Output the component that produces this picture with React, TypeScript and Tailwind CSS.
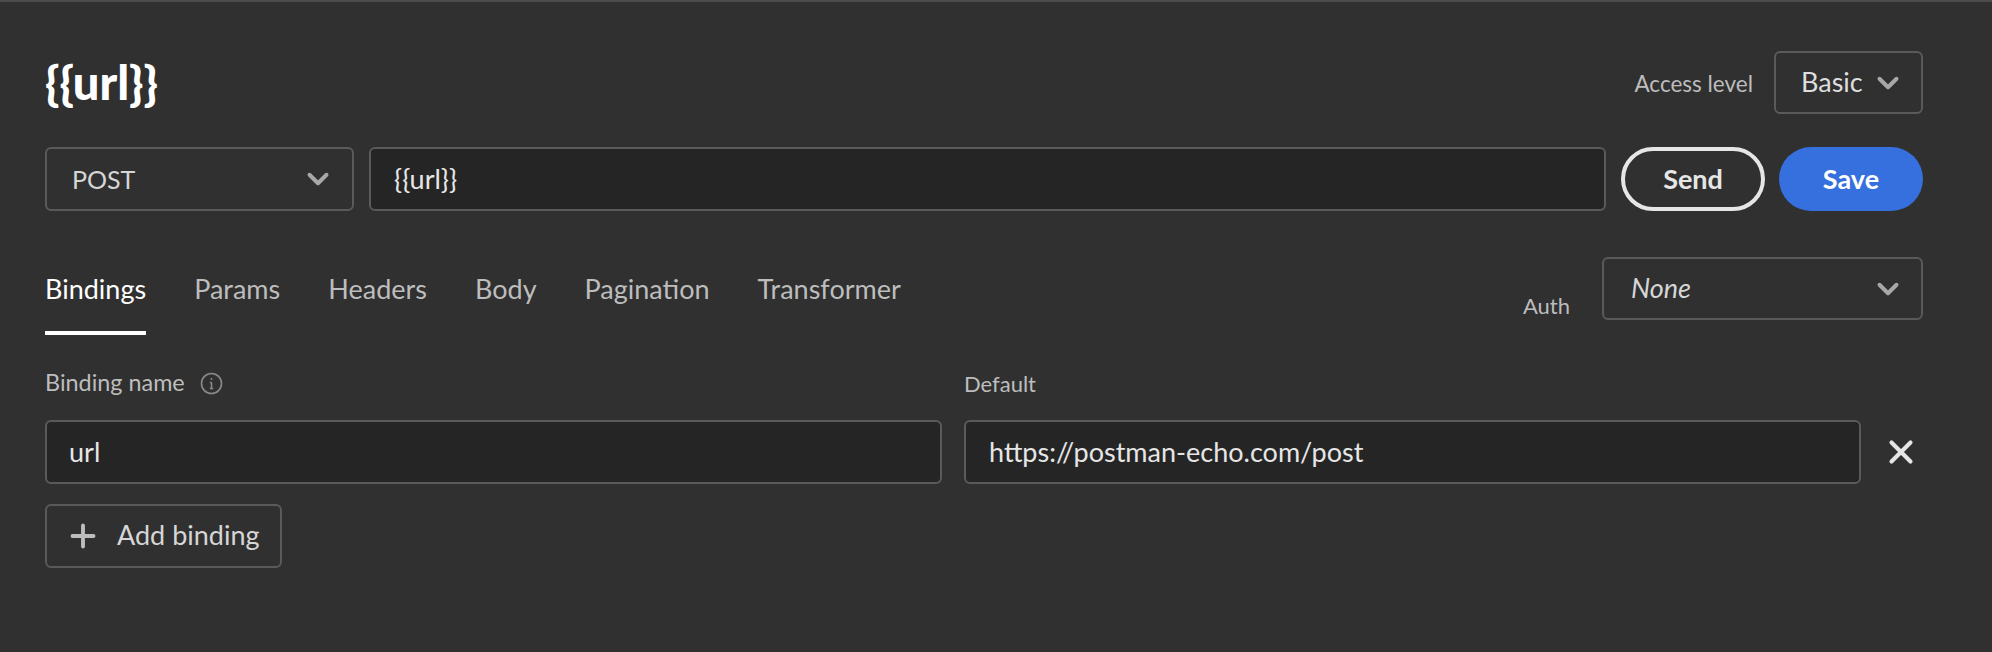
import { ChevronDown, Plus, X } from 'lucide-react';

const TABS = [
  { label: 'Bindings', active: true },
  { label: 'Params' },
  { label: 'Headers' },
  { label: 'Body' },
  { label: 'Pagination' },
  { label: 'Transformer' },
];

export default function App() {
  return (
    <div className="h-[652px] bg-[#303030] font-['Lato',sans-serif] text-[#e6e6e6] overflow-hidden">
      <div className="h-0.5 bg-[#4c4c4c]" />

      <div className="pl-[45px] pr-[69px] pt-[49px]">
        {/* Header */}
        <div className="flex items-center justify-between h-[63px]">
          <h1 className="text-[47px] font-black leading-none text-white">{'{{url}}'}</h1>
          <div className="flex items-center gap-[21px]">
            <span className="text-[22.5px] text-[#bdbdbd] pt-0.5">Access level</span>
            <button className="w-[149px] h-[63px] border-2 border-[#5a5a5a] rounded-md flex items-center justify-between pl-[25px] pr-4 text-[27px] text-[#dedede]">
              Basic
              <ChevronDown size={34} strokeWidth={2.8} className="text-[#a8a8a8]" />
            </button>
          </div>
        </div>

        {/* Request line */}
        <div className="flex items-center h-16 mt-[33px]">
          <button className="w-[309px] h-16 border-2 border-[#5a5a5a] rounded-md flex items-center justify-between pl-[25px] pr-[17px] text-[25px] text-[#d6d6d6]">
            <span className="pt-0.5">POST</span>
            <ChevronDown size={34} strokeWidth={2.8} className="text-[#a8a8a8]" />
          </button>
          <div className="ml-[15px] flex-1 h-16 bg-[#252525] border-2 border-[#5a5a5a] rounded-md flex items-center pl-[23px] text-[27px] text-[#e6e6e6]">
            {'{{url}}'}
          </div>
          <button className="ml-[15px] w-[144px] h-16 border-4 border-[#e6e6e6] rounded-full text-[27px] font-bold text-[#e6e6e6]">Send</button>
          <button className="ml-[14px] w-[144px] h-16 bg-[#3570de] rounded-full text-[27px] font-bold text-white">Save</button>
        </div>

        {/* Tabs + auth */}
        <div className="flex justify-between h-[78px] mt-[46px]">
          <div className="flex gap-[48px] items-end">
            {TABS.map(t => (
              <div
                key={t.label}
                className={`h-[61px] pb-[26px] flex items-center border-b-4 text-[27px] ${t.active ? 'border-white text-white' : 'border-transparent text-[#bdbdbd]'}`}
              >
                {t.label}
              </div>
            ))}
          </div>
          <div className="flex items-start gap-[32px]">
            <span className="text-[22px] text-[#bdbdbd] mt-[32px]">Auth</span>
            <button className="w-[321px] h-[63px] border-2 border-[#5a5a5a] rounded-md flex items-center justify-between pl-[27px] pr-4 text-[27px] italic text-[#d6d6d6]">
              None
              <ChevronDown size={34} strokeWidth={2.8} className="text-[#a8a8a8]" />
            </button>
          </div>
        </div>

        {/* Bindings */}
        <div className="flex gap-[22px] mt-[35px]">
          <div className="w-[897px]">
            <div className="h-[26px] flex items-center gap-[15px] text-[23.4px] text-[#bdbdbd]">
              Binding name
              <svg width="23" height="23" viewBox="0 0 23 23" fill="none" stroke="#8a8a8a" strokeWidth="1.6">
                <circle cx="11.5" cy="11.5" r="10" />
                <path d="M11.5 10.5v6M9.8 16.5h3.4M9.8 10.5h1.7" strokeWidth="1.5" />
                <circle cx="11.5" cy="7" r="1" fill="#8a8a8a" stroke="none" />
              </svg>
            </div>
            <div className="mt-6 h-16 bg-[#252525] border-2 border-[#5a5a5a] rounded-md flex items-center pl-[22px] text-[27px] text-[#e6e6e6]">url</div>
          </div>
          <div className="w-[897px]">
            <div className="h-[26px] flex items-center text-[22px] text-[#bdbdbd]">Default</div>
            <div className="mt-6 h-16 bg-[#252525] border-2 border-[#5a5a5a] rounded-md flex items-center pl-[23px] text-[27px] text-[#e6e6e6]">https://postman-echo.com/post</div>
          </div>
          <div className="mt-[50px] h-16 flex items-center">
            <X size={38} strokeWidth={2.6} className="ml-[-1px] text-[#e6e6e6]" />
          </div>
        </div>

        <button className="mt-5 w-[237px] h-[64px] border-2 border-[#5a5a5a] rounded-md flex items-center pl-[18px] gap-[16px] text-[27px] text-[#d6d6d6]">
          <Plus size={36} strokeWidth={2.6} className="text-[#bdbdbd]" />
          <span className="pb-0.5">Add binding</span>
        </button>
      </div>
    </div>
  );
}
